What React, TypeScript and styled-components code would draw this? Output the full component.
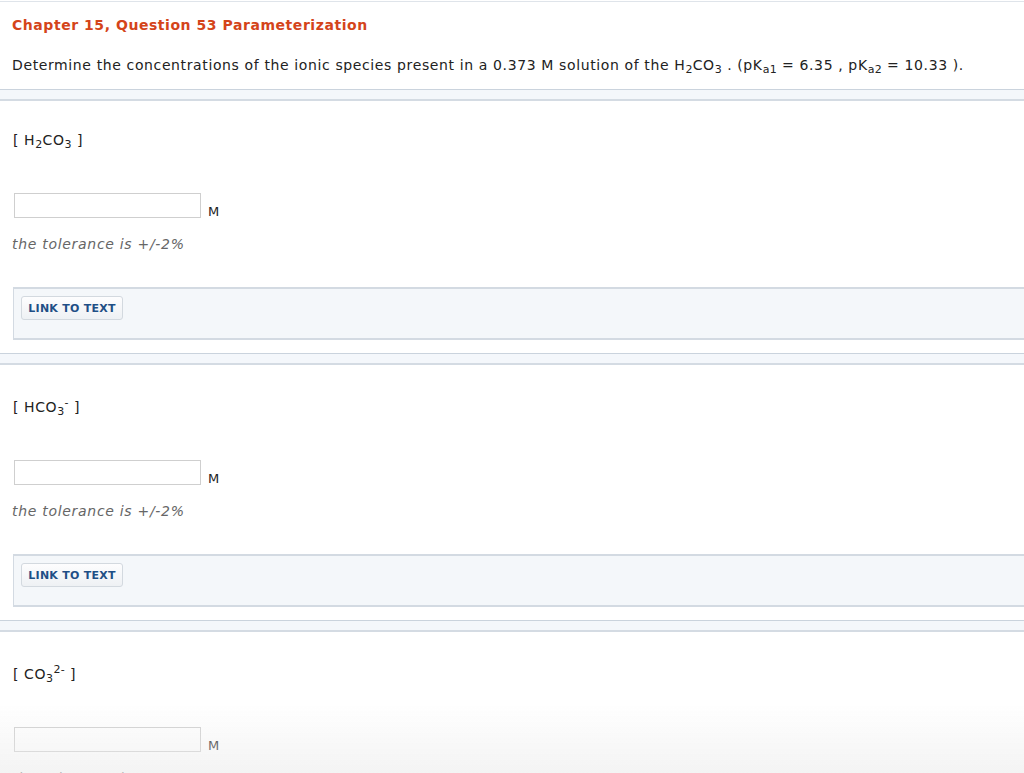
import React from "react";
import styled, { createGlobalStyle } from "styled-components";

const Global = createGlobalStyle`
  html, body { margin: 0; padding: 0; background: #fff; }
  body { font-family: "DejaVu Sans", Verdana, sans-serif; font-size: 14px; color: #222; }
`;

const Page = styled.div`
  width: 1024px;
  border-top: 1px solid #dfe4ea;
  margin-top: 1px;
`;

const Header = styled.div`
  padding: 14px 0 0 12px;
  height: 73px;
  box-sizing: border-box;
`;

const Title = styled.h1`
  margin: 0;
  font-size: 14px;
  letter-spacing: 0.55px;
  font-weight: bold;
  color: #d4441a;
  line-height: 18px;
`;

const Question = styled.p`
  margin: 22px 0 0;
  font-size: 14px;
  letter-spacing: 0.62px;
  line-height: 18px;
  color: #222;
  sub { font-size: 11px; line-height: 0; vertical-align: -3px; letter-spacing: 0.3px; }
`;

const Bar = styled.div<{ $top: number }>`
  height: 9px;
  border-top: 1px solid #cad3dd;
  border-bottom: 2px solid #d4dbe3;
  background: #f4f7fb;
  margin-top: ${(p) => p.$top}px;
`;

const Section = styled.section<{ $first: boolean }>`
  padding-top: ${(p) => (p.$first ? 30 : 33)}px;
`;

const Label = styled.div`
  padding-left: 13px;
  font-size: 14px;
  letter-spacing: 0.6px;
  line-height: 18px;
  color: #222;
  sub, sup { font-size: 11px; line-height: 0; letter-spacing: 0.3px; }
  sub { vertical-align: -3px; }
  sup { vertical-align: 6px; }
`;

const AnswerRow = styled.div`
  display: flex;
  align-items: flex-end;
  gap: 7px;
  padding-left: 14px;
  margin-top: 44px;
`;

const Input = styled.input`
  width: 187px;
  height: 25px;
  box-sizing: border-box;
  border: 1px solid #cfcfcf;
  background: #fff;
  margin: 0;
  padding: 0;
`;

const Unit = styled.span`
  font-size: 13px;
  line-height: 14px;
  margin-bottom: -1px;
  color: #222;
`;

const Tolerance = styled.div`
  padding-left: 12px;
  margin-top: 17px;
  font-style: italic;
  color: #666;
  font-size: 14px;
  letter-spacing: 0.7px;
  line-height: 18px;
`;

const LinkBox = styled.div`
  margin: 34px -4px 0 13px;
  height: 53px;
  box-sizing: border-box;
  border: 1px solid #d3dae2;
  border-width: 2px 1px 2px 1px;
  background: #f4f7fa;
  padding: 7px 0 0 7px;
`;

const LinkButton = styled.button`
  width: 102px;
  height: 24px;
  box-sizing: border-box;
  border: 1px solid #d3d9df;
  border-radius: 3px;
  background: linear-gradient(#fdfdfe, #eef1f4);
  color: #1f4f86;
  font-family: "DejaVu Sans", Verdana, sans-serif;
  font-weight: bold;
  font-size: 11px;
  letter-spacing: 0.25px;
  padding: 0;
  cursor: pointer;
`;

const Fade = styled.div`
  position: fixed;
  left: 0;
  right: 0;
  bottom: 0;
  height: 70px;
  background: linear-gradient(rgba(238, 238, 238, 0), rgba(236, 236, 236, 0.6));
  pointer-events: none;
`;

const items: React.ReactNode[] = [
  <>[ H<sub>2</sub>CO<sub>3</sub> ]</>,
  <>[ HCO<sub>3</sub><sup>-</sup> ]</>,
  <>[ CO<sub>3</sub><sup>2-</sup> ]</>,
];

export default function App() {
  return (
    <Page>
      <Global />
      <Header>
        <Title>Chapter 15, Question 53 Parameterization</Title>
        <Question>
          Determine the concentrations of the ionic species present in a 0.373 M solution of the H
          <sub>2</sub>CO<sub>3</sub> . (pK<sub>a1</sub> = 6.35 , pK<sub>a2</sub> = 10.33 ).
        </Question>
      </Header>
      <Bar $top={14} />
      {items.map((label, i) => (
        <React.Fragment key={i}>
          <Section $first={i === 0}>
            <Label>{label}</Label>
            <AnswerRow>
              <Input type="text" aria-label="answer" />
              <Unit>M</Unit>
            </AnswerRow>
            <Tolerance>the tolerance is +/-2%</Tolerance>
            <LinkBox>
              <LinkButton>LINK TO TEXT</LinkButton>
            </LinkBox>
          </Section>
          <Bar $top={13} />
        </React.Fragment>
      ))}
      <Fade />
    </Page>
  );
}
